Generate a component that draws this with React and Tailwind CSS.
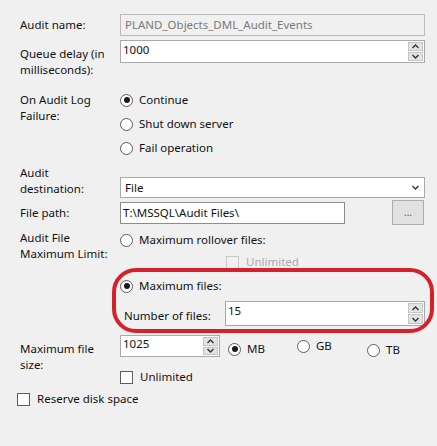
import React from 'react';

function Chevron({ up }) {
  return (
    <svg width="7" height="5" viewBox="0 0 7 5" className="block">
      <path d={up ? 'M0.5 4L3.5 1L6.5 4' : 'M0.5 1L3.5 4L6.5 1'} fill="none" stroke="#333" strokeWidth="1.4" />
    </svg>
  );
}

function Spinner() {
  return (
    <div className="flex flex-col w-[16px] h-full py-[1px] pr-[1px] gap-[1px]">
      <div className="flex-1 flex items-center justify-center bg-[#e3e3e3] border border-[#c4c4c4]">
        <Chevron up />
      </div>
      <div className="flex-1 flex items-center justify-center bg-[#e3e3e3] border border-[#c4c4c4]">
        <Chevron />
      </div>
    </div>
  );
}

function Radio({ checked, label, className = '' }) {
  return (
    <div className={`flex items-center ${className}`}>
      <span className="w-[13px] h-[13px] rounded-full border border-[#5c5c5c] bg-white flex items-center justify-center shrink-0">
        {checked && <span className="w-[6px] h-[6px] rounded-full bg-[#1a1a1a]" />}
      </span>
      <span className="ml-[6px]">{label}</span>
    </div>
  );
}

function Check({ label, disabled, className = '' }) {
  return (
    <div className={`flex items-center ${className}`}>
      <span className={`w-[13px] h-[13px] border shrink-0 ${disabled ? 'border-[#c8c8c8] bg-[#f0f0f0]' : 'border-[#5c5c5c] bg-white'}`} />
      <span className={`ml-[7px] ${disabled ? 'text-[#a8a8a8]' : ''}`}>{label}</span>
    </div>
  );
}

export default function App() {
  return (
    <div className="relative w-[437px] h-[446px] bg-[#f0f0f0] text-[11.5px] text-[#111] pl-[20px] pt-[14px] overflow-hidden" style={{ fontFamily: '"Noto Sans", "Open Sans", sans-serif' }}>
      {/* Audit name */}
      <div className="flex items-center h-[22px]">
        <div className="w-[100px]">Audit name:</div>
        <div className="w-[305px] h-[22px] border border-[#b9b9b9] bg-[#f0f0f0] text-[#7a7a7a] pl-[4px] flex items-center">
          PLAND_Objects_DML_Audit_Events
        </div>
      </div>

      {/* Queue delay */}
      <div className="flex items-start mt-[4px]">
        <div className="w-[100px] pt-[6px] leading-[16px]">Queue delay (in<br />milliseconds):</div>
        <div className="w-[305px] h-[23px] border border-[#a9a9a9] bg-white flex">
          <div className="flex-1 pl-[2px] leading-[18px]">1000</div>
          <Spinner />
        </div>
      </div>

      {/* On audit log failure */}
      <div className="flex items-start mt-[10px]">
        <div className="w-[100px] pt-[4px] leading-[16px]">On Audit Log<br />Failure:</div>
        <div className="flex flex-col">
          <Radio checked label="Continue" className="h-[24px]" />
          <Radio label="Shut down server" className="h-[24px]" />
          <Radio label="Fail operation" className="h-[24px]" />
        </div>
      </div>

      {/* Audit destination */}
      <div className="flex items-start mt-[5px]">
        <div className="w-[100px] leading-[16px]">Audit<br />destination:</div>
        <div className="mt-[12px] w-[305px] h-[21px] border border-[#a9a9a9] bg-white flex items-center pl-[4px] pr-[5px]">
          <span className="flex-1">File</span>
          <Chevron />
        </div>
      </div>

      {/* File path */}
      <div className="flex items-center h-[25px] mt-[2px]">
        <div className="w-[100px]">File path:</div>
        <div className="w-[225px] h-[22px] border border-[#8c8c8c] bg-white flex items-center pl-[2px]">T:\MSSQL\Audit Files\</div>
        <div className="ml-[47px] w-[32px] h-[25px] bg-[#e1e1e1] border border-[#adadad] flex items-center justify-center text-[#555] text-[10px] leading-none pb-[2px]">...</div>
      </div>

      {/* Audit file maximum limit */}
      <div className="flex items-start mt-[5px]">
        <div className="w-[100px] leading-[16px]">Audit File<br />Maximum Limit:</div>
        <div className="flex flex-col">
          <Radio label="Maximum rollover files:" className="h-[20px]" />
          <Check disabled label="Unlimited" className="h-[16px] mt-[4px] ml-[106px]" />
          <Radio checked label="Maximum files:" className="h-[20px] mt-[6px]" />
          <div className="flex items-center h-[25px] mt-[5px]">
            <div className="w-[105px] pl-[4px] pt-[4px]">Number of files:</div>
            <div className="w-[200px] h-[25px] border border-[#a9a9a9] bg-white flex">
              <div className="flex-1 pl-[2px] leading-[18px]">15</div>
              <Spinner />
            </div>
          </div>
        </div>
      </div>

      {/* Maximum file size */}
      <div className="flex items-start mt-[9px]">
        <div className="w-[100px] pt-[6px] leading-[16px]">Maximum file<br />size:</div>
        <div className="flex flex-col">
          <div className="flex items-start">
            <div className="w-[100px] h-[22px] border border-[#a9a9a9] bg-white flex">
              <div className="flex-1 pl-[2px] leading-[16px]">1025</div>
              <Spinner />
            </div>
            <Radio checked label="MB" className="w-[77px] pl-[8px] mt-[6px] h-[16px]" />
            <Radio label="GB" className="w-[70px] mt-[3px] h-[16px]" />
            <Radio label="TB" className="mt-[7px] h-[16px]" />
          </div>
          <Check label="Unlimited" className="h-[16px] mt-[11px]" />
        </div>
      </div>

      {/* Reserve disk space */}
      <Check label="Reserve disk space" className="h-[16px] mt-[6px] -ml-[3px]" />

      {/* red annotation */}
      <div className="absolute left-[112px] top-[268px] w-[322px] h-[65px] border-[4px] border-[#d6202c] rounded-[24px] pointer-events-none" />
    </div>
  );
}
